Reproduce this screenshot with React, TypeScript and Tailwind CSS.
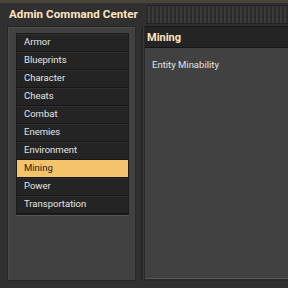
import React from "react";

const categories = [
  "Armor",
  "Blueprints",
  "Character",
  "Cheats",
  "Combat",
  "Enemies",
  "Environment",
  "Mining",
  "Power",
  "Transportation",
];

const App: React.FC = () => {
  const selected = "Mining";

  return (
    <div
      className="w-[288px] h-[288px] overflow-hidden bg-[#313031] border-t-[3px] border-[#4a4437] flex flex-col"
      style={{ fontFamily: "Roboto, 'Liberation Sans', sans-serif" }}
    >
      {/* title bar */}
      <div className="h-[23px] flex items-center pl-[9px]">
        <span className="text-[11.5px] font-bold text-[#ffe6c0] leading-none tracking-[0.1px]">
          Admin Command Center
        </span>
        <div className="flex-1 ml-[8px] h-[19px] border-y border-[#232323] bg-[repeating-linear-gradient(90deg,#2b2b2b_0px,#2b2b2b_2px,#3b3b3b_2px,#3b3b3b_4px)]" />
      </div>

      {/* body */}
      <div className="flex-1 flex pl-[7px] pb-[7px] gap-[5px]">
        {/* left panel */}
        <div className="w-[129px] bg-[#414141] border border-[#262626] border-r-[#2a2a2a] shadow-[inset_1px_1px_0_#4c4c4c] pl-[8px] pt-[6px] pr-[6px]">
          <div className="flex flex-col border border-[#1c1c1c] shadow-[0_1px_0_#555]">
            {categories.map((c) => (
              <div
                key={c}
                className={`h-[18px] flex items-center pl-[7px] text-[9.5px] border-b border-[#161616] ${
                  c === selected
                    ? "bg-[#f4c46a] text-[#1e1e1e]"
                    : "bg-[#242424] text-[#e4e4e4] shadow-[inset_0_1px_0_#2f2f2f]"
                }`}
              >
                {c}
              </div>
            ))}
          </div>
        </div>

        {/* right panel */}
        <div className="flex-1 flex flex-col border-l-[2px] border-[#262626] pl-[1px] bg-[#383838]">
          <div className="flex-1 flex flex-col bg-[#414141] border-l border-[#2a2a2a]">
            <div className="h-[22px] bg-[#242424] border-y border-[#161616] flex items-center pl-[2px]">
              <span className="text-[11px] font-bold text-[#ffe6c0] leading-none">Mining</span>
            </div>
            <div className="flex-1 pl-[7px] pt-[7px] leading-none">
              <span className="text-[9.5px] text-[#e4e4e4] leading-none">Entity Minability</span>
            </div>
            <div className="h-[3px] border-t border-[#555] bg-[#2a2a2a]" />
          </div>
        </div>
      </div>
    </div>
  );
};

export default App;
